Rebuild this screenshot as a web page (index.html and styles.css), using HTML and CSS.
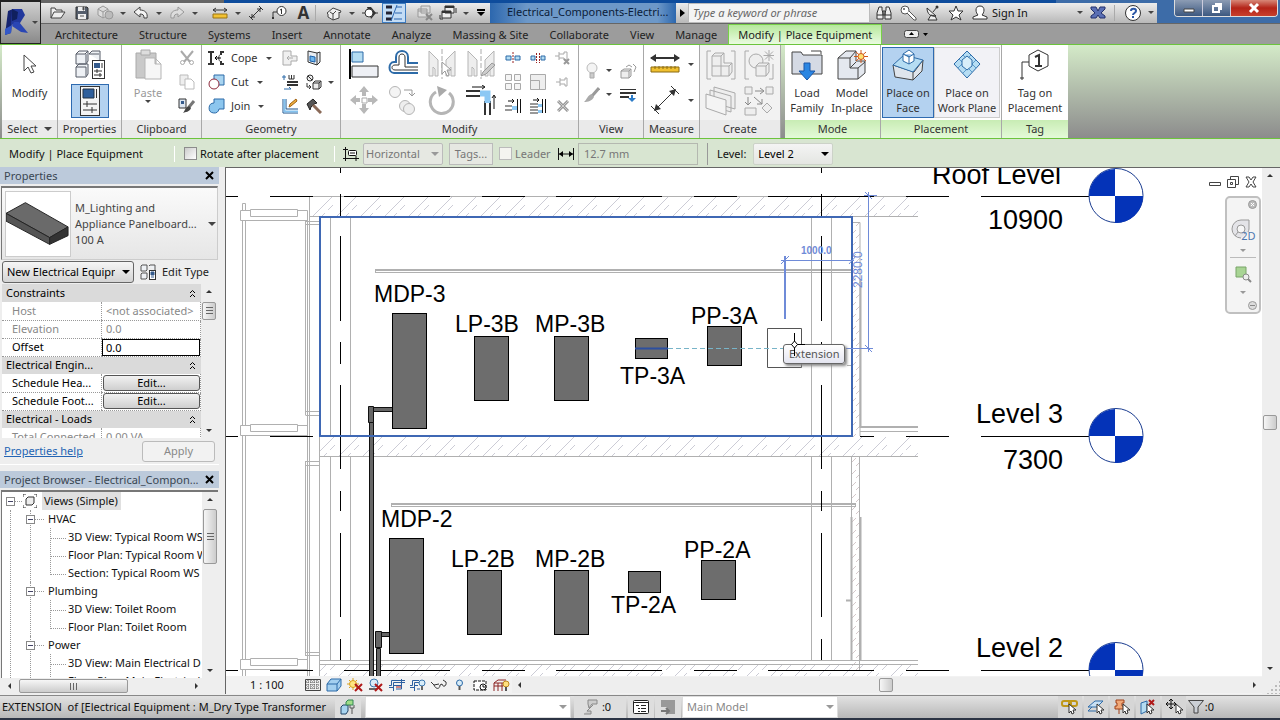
FILE: index.html
```html
<!DOCTYPE html>
<html lang="en">
<head>
    <meta charset="UTF-8">
    <meta name="viewport" content="width=device-width, initial-scale=1.0">
    <title>Electrical_Components-Electrical</title>
    <link rel="stylesheet" href="styles.css">
</head>
<body>
<header class="app-header">
    <button class="app-button" aria-label="Application menu">
        <svg width="26" height="30" viewBox="0 0 26 30"><path d="M4 3L9 1 7 25 1 27z" fill="#16246f"/><path d="M8 1L18 1 21 7 16 15 7 17z" fill="#22389c"/><path d="M8 1L14 4 13 11 8 13z" fill="#10205e"/><path d="M10 14L15 14 24 25 17 24 8 18z" fill="#2a46b4"/><path d="M1 21L8 17 7 25 1 27z" fill="#3458c8"/></svg>
        <i class="caret"></i>
    </button>
    <div class="titlebar">
        <div class="qat">
            <button aria-label="Open"><svg width="16" height="14" viewBox="0 0 16 14"><path d="M1 12V2h4l1 2h6v2M1 12l3-6h11l-4 6z" fill="#eee" stroke="#444"/></svg></button>
            <button aria-label="Save"><svg width="14" height="14" viewBox="0 0 14 14"><path d="M1 1h11l1 1v11H1z" fill="#555e6c" stroke="#333"/><path d="M3 1h7v4H3zM3 8h8v5H3z" fill="#eee"/><path d="M8 1h1v3H8zM5 10h4" fill="#333" stroke="#555"/></svg></button>
            <button aria-label="Synchronize"><svg width="17" height="16" viewBox="0 0 17 16"><path d="M1 4l5-3 5 3v6l-5 3-5-3zM1 4l5 3 5-3M6 7v6" fill="#ddd" stroke="#999"/><circle cx="12" cy="10" r="4" fill="#bbb" stroke="#999"/></svg></button>
            <button class="drop" aria-label="Synchronize options"><i class="caret"></i></button>
            <button aria-label="Undo"><svg width="16" height="14" viewBox="0 0 16 14"><path d="M1 6l6-5v3c5 0 8 3 7 8h-3c0-3-1-4-4-4v3z" fill="#f4f4f4" stroke="#444"/></svg></button>
            <button class="drop" aria-label="Undo list"><i class="caret"></i></button>
            <button aria-label="Redo"><svg width="16" height="14" viewBox="0 0 16 14"><path d="M15 6L9 1v3C4 4 1 7 2 12h3c0-3 1-4 4-4v3z" fill="#ddd" stroke="#999"/></svg></button>
            <button class="drop" aria-label="Redo list"><i class="caret"></i></button>
            <span class="sep"></span>
            <button aria-label="Measure"><svg width="16" height="12" viewBox="0 0 16 12"><path d="M1 3h14M4 1L1 3l3 2M12 1l3 2-3 2" fill="none" stroke="#333"/><path d="M1 7h14v4H1z" fill="#f2c233" stroke="#9a7414"/></svg></button>
            <button class="drop" aria-label="Measure options"><i class="caret"></i></button>
            <button aria-label="Aligned Dimension"><svg width="16" height="16" viewBox="0 0 16 16"><path d="M3 13L13 3M1 11l4 4M11 1l4 4M4 9v3h3M9 4h3v3" fill="none" stroke="#333"/></svg></button>
            <button aria-label="Tag by Category"><svg width="16" height="14" viewBox="0 0 16 14"><circle cx="10.500" cy="5" r="4.500" fill="#fff" stroke="#333"/><path d="M6 6H2v6M10.500 3v5M9 4l2-1" stroke="#333" fill="none"/><path d="M1 11h2v2H1z" fill="#333"/></svg></button>
            <button aria-label="Text" class="text-tool">A</button>
            <span class="sep thin"></span>
            <button aria-label="Default 3D View"><svg width="16" height="15" viewBox="0 0 16 15"><path d="M1 7l6-5 8 3-1 2-1-1v6l-6 2-5-3V8z" fill="#eee" stroke="#444"/><path d="M7 14V8l3-3M7 8L4 6" fill="none" stroke="#444"/></svg></button>
            <button class="drop" aria-label="3D View options"><i class="caret"></i></button>
            <button aria-label="Section"><svg width="16" height="14" viewBox="0 0 16 14"><path d="M5 1h4l5 6-5 6z" fill="#333"/><circle cx="7" cy="7" r="4" fill="#fff" stroke="#333"/><path d="M0 7h3M12 7h4" stroke="#333"/></svg></button>
            <button class="active" aria-label="Thin Lines"><svg width="18" height="16" viewBox="0 0 18 16"><path d="M1 2h6M1 8h6M1 14h6" stroke="#223" stroke-width="3"/><path d="M11 2h6M10 8h7M9 14h8M12 0L6 16" stroke="#2a65b0"/></svg></button>
            <span class="sep"></span>
            <button aria-label="Close Hidden Windows"><svg width="16" height="16" viewBox="0 0 16 16"><path d="M4 1h9v7H4zM1 4h9v8H1zM1 6h9" fill="#ddd" stroke="#999"/><path d="M9 9l6 6M15 9l-6 6" stroke="#888" stroke-width="2"/></svg></button>
            <button aria-label="Switch Windows"><svg width="18" height="16" viewBox="0 0 18 16"><path d="M6 1h9v7H6zM3 6h9v7H3z" fill="#eee" stroke="#333"/><path d="M6 2h9M3 7h9" stroke="#333" stroke-width="2"/><path d="M1 10v4h3M17 3v5" stroke="#333" fill="none"/></svg></button>
            <button class="drop" aria-label="Window list"><i class="caret"></i></button>
            <button class="drop" aria-label="Customize Quick Access Toolbar"><svg width="8" height="8" viewBox="0 0 8 8"><path d="M0 1h8" stroke="#000" stroke-width="2"/><path d="M0 3h8L4 7z"/></svg></button>
        </div>
        <div class="doc-title">Electrical_Components-Electri...</div>
        <div class="infocenter">
            <button class="drop" aria-label="Expand search"><svg width="5" height="8" viewBox="0 0 5 8"><path d="M0 0l5 4-5 4z"/></svg></button>
            <input class="search" type="text" placeholder="Type a keyword or phrase" aria-label="Search">
            <button aria-label="Find"><svg width="16" height="16" viewBox="0 0 16 16"><path d="M3 2h3v3l1 3v6H1V8zM10 2h3l2 6v6H9V8l1-3zM7 6h2v4H7zM1 10h6M9 10h6" fill="#eee" stroke="#333"/></svg></button>
            <button aria-label="Subscription Center"><svg width="17" height="16" viewBox="0 0 17 16"><circle cx="5" cy="5" r="4" fill="#fff" stroke="#555"/><path d="M7 8l7 7h2v-2L9 6" fill="#fff" stroke="#555"/><circle cx="4" cy="4" r="1" fill="#555"/></svg></button>
            <button aria-label="Communication Center"><svg width="15" height="16" viewBox="0 0 15 16"><path d="M2 3c0 6 4 9 9 8zM8 7l4-5M3 15l3-5 4 1 2 4z" fill="#eee" stroke="#333"/><circle cx="12" cy="2" r="1.500" fill="#333"/></svg></button>
            <button aria-label="Favorites"><svg width="16" height="16" viewBox="0 0 16 16"><path d="M8 1l2 5h5l-4 4 2 5-5-3-5 3 2-5-4-4h5z" fill="#fff" stroke="#333"/></svg></button>
            <button class="sign-in"><svg width="16" height="15" viewBox="0 0 16 15"><path d="M8 1c3 0 4 2 4 4s-1 4-2 5l5 2v2H1v-2l5-2C5 9 4 7 4 5s1-4 4-4z" fill="#fff" stroke="#333"/></svg>Sign In</button>
            <button class="drop push" aria-label="Account menu"><i class="caret"></i></button>
            <button aria-label="Exchange Apps"><svg width="16" height="13" viewBox="0 0 16 13"><path d="M1 1h5l2 4 2-4h5v2l-4 4 4 3v2h-5L8 9l-2 3H1v-2l4-3-4-4z" fill="#5a6fb4" stroke="#22306c"/></svg></button>
            <span class="sep thin"></span>
            <button aria-label="Help"><svg width="16" height="16" viewBox="0 0 16 16"><circle cx="8" cy="8" r="7.500" fill="#fff" stroke="#333"/><path d="M6 6c0-3 5-3 5 0 0 2-3 2-3 4M8 11v2" fill="none" stroke="#2c57a5" stroke-width="2"/></svg></button>
            <button class="drop" aria-label="Help menu"><i class="caret"></i></button>
        </div>
        <div class="window-buttons">
            <button aria-label="Minimize"><svg width="12" height="12" viewBox="0 0 12 12"><path d="M1 7h10v3H1z" fill="#fff" stroke="#444"/></svg></button>
            <button aria-label="Restore"><svg width="12" height="12" viewBox="0 0 12 12"><path d="M4 2h6v6M2 4h6v6H2z" fill="none" stroke="#fff" stroke-width="2"/></svg></button>
            <button class="close" aria-label="Close"><svg width="12" height="12" viewBox="0 0 12 12"><path d="M2 2l8 8M10 2l-8 8" stroke="#fff" stroke-width="3"/></svg></button>
        </div>
    </div>
    <nav class="tabs">
        <a href="#">Architecture</a><a href="#">Structure</a><a href="#">Systems</a><a href="#">Insert</a><a href="#">Annotate</a><a href="#">Analyze</a><a href="#">Massing &amp; Site</a><a href="#">Collaborate</a><a href="#">View</a><a href="#">Manage</a><a href="#" class="current">Modify | Place Equipment</a>
        <button class="ribbon-toggle" aria-label="Minimize ribbon"><svg width="24" height="10" viewBox="0 0 24 10"><rect x=".5" y="1.500" width="14" height="7" rx="2" fill="#eee" stroke="#444"/><path d="M5 6h5L7.500 3zM19 4h5l-2.500 3z"/></svg></button>
    </nav>
</header>

<div class="ribbon">
    <section class="panel p-select">
        <div class="body">
            <button class="big"><svg width="32" height="32" viewBox="0 0 32 32"><path d="M11 6v16l4-4 3 6 3-1-3-6h5z" fill="#fff" stroke="#444"/></svg>Modify</button>
        </div>
        <h2>Select <i class="caret"></i></h2>
    </section>
    <section class="panel p-props">
        <div class="body stack">
            <button aria-label="Type Properties"><svg width="32" height="32" viewBox="0 0 32 32"><path d="M2 5l3-3h9v10l-2 3H2zM15 5l3-3h8v10M2 18l3-3h9v10l-2 3H2zM15 5h10M2 5h9l3-3M12 5v9M2 18h10v9" fill="#eef1f5" stroke="#555a66"/><rect x="18.500" y="11.500" width="12" height="18" fill="#fff" stroke="#333"/><path d="M20 14h6v5h-6z" fill="#345a8c"/><path d="M28 14v5M20 22h8M20 26h8M23 20v4M26 24v4" stroke="#333"/></svg></button>
            <button class="active" aria-label="Properties"><svg width="32" height="32" viewBox="0 0 32 32"><rect x="6.500" y="1.500" width="19" height="29" fill="#f4f4f4" stroke="#333"/><path d="M9 4h11v9H9z" fill="#2f5f9c" stroke="#234"/><path d="M22.500 4v9M9 19h14M9 25h14M13 16v6M18 22v6" stroke="#333"/></svg></button>
        </div>
        <h2>Properties</h2>
    </section>
    <section class="panel p-clip">
        <div class="body clip">
            <button class="big off"><svg width="32" height="32" viewBox="0 0 32 32"><path d="M4 4h20v25H4z" fill="#c9c9c9" stroke="#aaa"/><path d="M9 1h9v5H9z" fill="#ddd" stroke="#aaa"/><path d="M13 9h10l6 6v15H13zM23 9v6h6" fill="#f6f6f6" stroke="#b5b5b5"/></svg>Paste<i class="caret"></i></button>
            <div class="small-col">
                <button aria-label="Cut"><svg width="16" height="16" viewBox="0 0 16 16"><path d="M2 1l9 11M14 1L5 12" stroke="#aaa" stroke-width="2"/><circle cx="3.500" cy="12.500" r="2" fill="none" stroke="#aaa"/><circle cx="12.500" cy="12.500" r="2" fill="none" stroke="#aaa"/></svg></button>
                <button aria-label="Copy"><svg width="16" height="16" viewBox="0 0 16 16"><path d="M1 1h8v10H1z" fill="#eee" stroke="#bbb"/><path d="M6 5h6l3 3v7H6z" fill="#fff" stroke="#bbb"/></svg></button>
                <button aria-label="Match Type"><svg width="18" height="16" viewBox="0 0 18 16"><path d="M1 1h7v9H1z" fill="#dde6f2" stroke="#333"/><path d="M3 3h3v3H3z" fill="#345a8c"/><path d="M16 3l-5 6" stroke="#777" stroke-width="3"/><path d="M11 8l2 2c-1 4-6 4-8 5 2-2 2-6 6-7z" fill="#444"/></svg></button>
            </div>
        </div>
        <h2>Clipboard</h2>
    </section>
    <section class="panel p-geom">
        <div class="body geom">
            <button class="row"><svg width="17" height="16" viewBox="0 0 17 16"><path d="M0 2h6M0 14h6M3 2v12M16 2h-3v3M13 11v3h3" fill="none" stroke="#333" stroke-width="2"/><path d="M13 4c-3 1-3 7 0 8" fill="none" stroke="#333"/><path d="M7 8h6M9 6L7 8l2 2" stroke="#000" fill="none"/></svg>Cope<i class="caret"></i></button>
            <button aria-label="Join End"><svg width="16" height="16" viewBox="0 0 16 16"><path d="M1 1h8v5h6v5H9v4H1zM5 8h6M7 6L5 8l2 2" fill="#f0f0f0" stroke="#aaa"/></svg></button>
            <button aria-label="Wall Opening"><svg width="16" height="16" viewBox="0 0 16 16"><path d="M2 1l9 2 3-1v10l-3 3-9-3z" fill="#e8edf3" stroke="#333"/><path d="M4 6l5 1v5l-5-1z" fill="#6db6ee" stroke="#1b5fa8"/><path d="M11 3v12" stroke="#333"/></svg></button>
            <button class="row"><svg width="17" height="16" viewBox="0 0 17 16"><path d="M6 1h10v10H6z" fill="#a8d4f0" stroke="#2d6ba8"/><circle cx="6" cy="10" r="5" fill="#fff" stroke="#8e2a3c"/></svg>Cut<i class="caret"></i></button>
            <button aria-label="Beam Joins"><svg width="16" height="16" viewBox="0 0 16 16"><path d="M5 8h11M5 11h11" stroke="#333" stroke-width="2"/><path d="M7 1v4h5V1M9.500 1v4" stroke="#333" fill="none"/><path d="M2 1v5M0 3h4M2 15h7M7 13l2 2" stroke="#2d6ba8" fill="none"/></svg></button>
            <button class="wide" aria-label="Split Face"><svg width="16" height="16" viewBox="0 0 16 16"><circle cx="4" cy="4" r="3" fill="#eee" stroke="#333"/><path d="M2 2l4 4M1 9v4h3M3 11l2 2-2 2" stroke="#333" fill="none"/><path d="M7 9l2-2h6v6l-2 2H7zM7 9h6v6M13 9l2-2" fill="#eee" stroke="#333"/></svg><i class="caret"></i></button>
            <button class="row"><svg width="17" height="16" viewBox="0 0 17 16"><path d="M6 1h10v10h-5a5 5 0 1 1-5-6z" fill="#8cc6ee" stroke="#2d6ba8"/></svg>Join<i class="caret"></i></button>
            <button aria-label="Wall Joins"><svg width="16" height="16" viewBox="0 0 16 16"><path d="M1 1v14h15M4 1v10h12" fill="none" stroke="#1b4f86"/><path d="M2.500 1v12.500H16" fill="none" stroke="#85c2ee" stroke-width="2"/><path d="M7 9l1-3 6-5 1 2-6 5z" fill="#f0b040" stroke="#a06010"/></svg></button>
            <button aria-label="Demolish"><svg width="16" height="16" viewBox="0 0 16 16"><path d="M1 6l6-5 4 4-3 1-3 3-1 3z" fill="#555" stroke="#222"/><path d="M7 7l8 8" stroke="#8a6a58" stroke-width="3"/></svg></button>
        </div>
        <h2>Geometry</h2>
    </section>
    <section class="panel p-modify">
        <div class="body modify">
            <div class="big-grid">
                <button aria-label="Align"><svg width="30" height="30" viewBox="0 0 30 30"><path d="M1 0v30" stroke="#000" stroke-width="2"/><path d="M3 3h11v10H3z" fill="#b4dcf2" stroke="#2d6ba8"/><path d="M3 17h26v11H3z" fill="#eef0f5" stroke="#333"/></svg></button>
                <button aria-label="Offset"><svg width="30" height="30" viewBox="0 0 30 30"><path d="M30 14H20V8c0-8-12-8-12 0v5H6c-6 0-6 11 0 11h24" fill="none" stroke="#2d6ba8" stroke-width="2"/><path d="M30 18H17V8c0-4-6-4-6 0v8H7c-4 0-4 5 0 5h23" fill="none" stroke="#333"/></svg></button>
                <button aria-label="Mirror - Pick Axis"><svg width="30" height="30" viewBox="0 0 30 30"><path d="M2 2l9 9v16H8v-7l-2-2v9H2zM28 2l-9 9v16h3v-7l2-2v9h4z" fill="#eee" stroke="#b5b5b5"/><path d="M15 0v30" stroke="#aaa" stroke-dasharray="5 2"/><path d="M15 13v12l3-3 2 5 2-1-2-5h4z" fill="#fff" stroke="#999"/></svg></button>
                <button aria-label="Mirror - Draw Axis"><svg width="30" height="30" viewBox="0 0 30 30"><path d="M2 2l9 9v16H8v-7l-2-2v9H2zM28 2l-9 9v16h3v-7l2-2v9h4z" fill="#eee" stroke="#b5b5b5"/><path d="M15 0v30" stroke="#aaa" stroke-dasharray="5 2"/><path d="M15 27l2-4 9-9 3 2-9 9z" fill="#ccc" stroke="#999"/></svg></button>
                <button aria-label="Move"><svg width="30" height="30" viewBox="0 0 30 30"><path d="M15 1l5 6h-3v4h-4V7h-3zM15 29l5-6h-3v-4h-4v4h-3zM1 15l6-5v3h4v4H7v3zM29 15l-6-5v3h-4v4h4v3z" fill="#b8b8b8"/><path d="M13 13h5v5h-5z" fill="#fff" stroke="#aaa"/></svg></button>
                <button aria-label="Copy element"><svg width="30" height="30" viewBox="0 0 30 30"><circle cx="7" cy="7" r="5.500" fill="#f4f4f4" stroke="#b5b5b5"/><circle cx="17" cy="21" r="5.500" fill="#eee" stroke="#b5b5b5"/><circle cx="21" cy="24" r="5.500" fill="#eee" stroke="#b5b5b5"/><path d="M16 5h8v6M21 8l3 3 3-3" fill="none" stroke="#999"/></svg></button>
                <button aria-label="Rotate"><svg width="30" height="30" viewBox="0 0 30 30"><path d="M9 7a11.500 11.500 0 1 0 13 1" fill="none" stroke="#b5b5b5" stroke-width="3"/><path d="M10 1l10 4-8 7z" fill="#aaa"/></svg></button>
                <button aria-label="Trim/Extend to Corner"><svg width="30" height="30" viewBox="0 0 30 30"><path d="M0 6h14M0 11h14M19 16v14M24 16v14" stroke="#333" stroke-width="2"/><path d="M14 8.500h7.500V18" fill="none" stroke="#8cc8f4" stroke-width="6"/><path d="M6 2h12M16 0l3 2-3 2M28 24V11M26 13l2-3 2 3" fill="none" stroke="#111"/></svg></button>
            </div>
            <div class="small-grid">
                <button aria-label="Split Element"><svg width="16" height="12" viewBox="0 0 16 12"><path d="M1 4h5v4H1zM10 4h5v4h-5z" fill="#b4dcf2" stroke="#2d6ba8"/><path d="M8 0v12" stroke="#922" stroke-dasharray="2 1"/></svg></button>
                <button aria-label="Split with Gap"><svg width="16" height="12" viewBox="0 0 16 12"><path d="M1 4h4v4H1zM11 4h4v4h-4z" fill="#b4dcf2" stroke="#2d6ba8"/><path d="M6.500 1v10M9.500 1v10" stroke="#922" stroke-dasharray="2 1"/></svg></button>
                <button aria-label="Unpin"><svg width="16" height="16" viewBox="0 0 16 16"><path d="M0 6h4M4 2v8M4 4h5V2h3v8H9V8H4" fill="none" stroke="#aaa"/><path d="M9 9l5 5M14 9l-5 5" stroke="#999" stroke-width="2"/></svg></button>
                <button aria-label="Array"><svg width="16" height="16" viewBox="0 0 16 16"><path d="M.500.500h6v6h-6zM9.500.500h6v6h-6zM.500 9.500h6v6h-6zM9.500 9.500h6v6h-6z" fill="#f4f4f4" stroke="#aaa"/></svg></button>
                <button aria-label="Scale"><svg width="16" height="16" viewBox="0 0 16 16"><path d="M.500.500h15v15H.500z" fill="#eee" stroke="#aaa"/><path d="M1 6.500h8.500V15" fill="none" stroke="#aaa"/></svg></button>
                <button aria-label="Pin"><svg width="16" height="16" viewBox="0 0 16 16"><path d="M1 8h4M5 4v8M5 6h5V4h2v8h-2v-2H5" fill="none" stroke="#aaa"/></svg></button>
                <button aria-label="Trim/Extend Single"><svg width="16" height="16" viewBox="0 0 16 16"><path d="M0 8h7M0 12h7" stroke="#333"/><path d="M7 10h5" stroke="#8cc8f4" stroke-width="4"/><path d="M12.500 1v14M15.500 1v14" stroke="#111"/><path d="M3 3h6M7 1l2 2-2 2" stroke="#111" fill="none"/></svg></button>
                <button aria-label="Trim/Extend Multiple"><svg width="16" height="16" viewBox="0 0 16 16"><path d="M0 6h8M0 9h8M0 12h8M0 15h8" stroke="#333"/><path d="M8 7.500h4M8 13.500h4" stroke="#8cc8f4" stroke-width="3"/><path d="M12.500 1v14M15.500 1v14" stroke="#111"/><path d="M3 2h6M7 0l2 2-2 2" stroke="#111" fill="none"/></svg></button>
                <button aria-label="Delete"><svg width="12" height="12" viewBox="0 0 12 12"><path d="M1 1l10 10M11 1L1 11" stroke="#999" stroke-width="3"/><path d="M1 1l10 10M11 1L1 11" stroke="#ccc"/></svg></button>
            </div>
        </div>
        <h2>Modify</h2>
    </section>
    <section class="panel p-view">
        <div class="body pair">
            <button class="wide" aria-label="Hide in View"><svg width="16" height="18" viewBox="0 0 16 18"><circle cx="8" cy="6" r="5" fill="#f4f4f4" stroke="#bbb"/><path d="M6 11h4v5H6z" fill="#ccc" stroke="#aaa"/></svg><i class="caret"></i></button>
            <button aria-label="Displace"><svg width="18" height="16" viewBox="0 0 18 16"><path d="M2 8l3-2h7v7l-2 2H2zM2 8h8v7M10 8l2-2" fill="#eee" stroke="#999"/><path d="M7 4l3-2 3 2M14 1l3 3-2 5" fill="none" stroke="#999"/></svg></button>
            <button class="wide" aria-label="Override Graphics"><svg width="16" height="16" viewBox="0 0 16 16"><path d="M15 1L8 9" stroke="#999" stroke-width="3"/><path d="M8 7l2 3c-2 4-6 5-10 5 3-2 3-7 8-8z" fill="#aaa"/></svg><i class="caret"></i></button>
            <button aria-label="Linework"><svg width="16" height="16" viewBox="0 0 16 16"><path d="M0 2.500h16" stroke="#333"/><path d="M0 6h16" stroke="#333" stroke-width="2"/><path d="M0 10h9" stroke="#333" stroke-width="2"/><path d="M11 8v3H8l4 4 4-4h-3V8z" fill="#2d7cc8"/></svg></button>
        </div>
        <h2>View</h2>
    </section>
    <section class="panel p-measure">
        <div class="body measure">
            <button class="wide" aria-label="Measure Between"><svg width="30" height="30" viewBox="0 0 30 30"><path d="M1 9h28" stroke="#333" stroke-width="2"/><path d="M6 5L0 9l6 4zM24 5l6 4-6 4z" fill="#333"/><path d="M1 18h28v5H1z" fill="#f0c030" stroke="#8a6a10"/><path d="M5 17v3M9 17v3M13 17v3M17 17v3M21 17v3M25 17v3" stroke="#8a6a10"/></svg><i class="caret"></i></button>
            <button class="wide" aria-label="Aligned"><svg width="30" height="30" viewBox="0 0 30 30"><path d="M5 25L25 5M1 21l8 8M21 1l8 8" stroke="#333"/><path d="M4 26l2-7 5 5zM26 4l-7 2 5 5z" fill="#333"/></svg><i class="caret"></i></button>
        </div>
        <h2>Measure</h2>
    </section>
    <section class="panel p-create">
        <div class="body pair create">
            <button aria-label="Create Assembly"><svg width="30" height="30" viewBox="0 0 30 30"><path d="M5 1H1v28h4M25 1h4v28h-4" fill="none" stroke="#aaa"/><path d="M6 6l3-3h9v10h8v9l-3 4H6zM6 16h17l3-3M6 6h9v10M15 6l3-3M15 16v10M23 16v10" fill="#eee" stroke="#aaa"/></svg></button>
            <button aria-label="Create Similar"><svg width="30" height="30" viewBox="0 0 30 30"><path d="M5 1H1v28h4M29 14v15h-4" fill="none" stroke="#aaa"/><circle cx="12" cy="11" r="7" fill="#eee" stroke="#aaa"/><path d="M12 16l3-3h10v9l-3 4H12zM12 16h10v10M22 16l3-3" fill="#eee" stroke="#aaa"/><path d="M25 0v11M19.500 5.500h11M21 1.500l8 8M29 1.500l-8 8" stroke="#aaa"/></svg></button>
            <button aria-label="Create Parts"><svg width="32" height="30" viewBox="0 0 32 30"><path d="M9 1l21 6v16l-21-6zM5 4l21 6v16l-21-6z" fill="#eee" stroke="#aaa"/><path d="M1 8l20 6v15L1 22z" fill="#f4f4f4" stroke="#aaa"/></svg></button>
            <button aria-label="Create Group"><svg width="30" height="30" viewBox="0 0 30 30"><path d="M1 1h7v7H1zM22 1h7v7h-7zM1 22h11v7H1zM23 17l5 5-5 5-5-5z" fill="#eee" stroke="#aaa"/><path d="M11 5h8M16 2l4 3-4 3M4 11v7M1 16l3 3 3-3M10 11l8 7M18 13v5h-5" fill="none" stroke="#888"/></svg></button>
        </div>
        <h2>Create</h2>
    </section>
    <section class="panel green p-mode">
        <div class="body">
            <button class="big"><svg width="32" height="32" viewBox="0 0 32 32"><path d="M1 3h9l2 3h19v19H1z" fill="#d5dae4" stroke="#444"/><path d="M20 2h10v3" fill="none" stroke="#444"/><path d="M13 14h6v8h5l-8 9-8-9h5z" fill="#2b86e2" stroke="#1a56a8"/></svg>Load<br>Family</button>
            <button class="big"><svg width="32" height="32" viewBox="0 0 32 32"><path d="M2 9l8-7h10v10h9v12l-7 6H2z" fill="#e4e8ef" stroke="#444"/><path d="M2 9h12l6-7M14 9v10h8v11M14 19l6-6M22 19l7-6" fill="none" stroke="#444"/><path d="M25 1v13M18 7.500h14M20 3l10 9M30 3l-10 9" stroke="#d0581c"/><circle cx="25" cy="7.500" r="3" fill="#ffe070" stroke="#d0581c"/></svg>Model<br>In-place</button>
        </div>
        <h2>Mode</h2>
    </section>
    <section class="panel green p-place">
        <div class="body">
            <button class="big active"><svg width="32" height="32" viewBox="0 0 32 32"><path d="M1 16l2 12 18 3 9-9 1-11-9 12z" fill="#dfe5ec" stroke="#444"/><path d="M21 23v8" stroke="#444"/><path d="M1 16L12 6l19 5-10 12z" fill="#b6ddf3" stroke="#2d6ba8"/><path d="M11 5l6-4 5 4v7l-5 3-6-3zM11 5l6 3 5-3M17 8v7" fill="#fff" stroke="#2d6ba8"/></svg>Place on<br>Face</button>
            <button class="big framed"><svg width="32" height="32" viewBox="0 0 32 32"><path d="M16 2l13 13-13 14L3 15z" fill="#b6ddf3" stroke="#2d6ba8"/><path d="M12 6l13 13M8 10l13 13M20 6L7 19M25 11L12 24" stroke="#5b9ccc"/><path d="M11 11l5-4 5 4v6l-5 4-5-4z" fill="#d8eef9" stroke="#2d6ba8"/></svg>Place on<br>Work Plane</button>
        </div>
        <h2>Placement</h2>
    </section>
    <section class="panel green p-tag">
        <div class="body">
            <button class="big"><svg width="32" height="32" viewBox="0 0 32 32"><path d="M19 1l10 5v11l-10 5-9-5V6z" fill="#fff" stroke="#333"/><path d="M10 13H3v14" fill="none" stroke="#333"/><path d="M2 28h2v2H2z" fill="#fff" stroke="#333"/><path d="M16 8l4-2v11M16 17h7" fill="none" stroke="#333" stroke-width="2"/></svg>Tag on<br>Placement</button>
        </div>
        <h2>Tag</h2>
    </section>
</div>

<form class="options-bar">
    <strong class="mode-name">Modify | Place Equipment</strong>
    <label class="check"><input type="checkbox">Rotate after placement</label>
    <div class="tag-options">
        <svg width="16" height="14" viewBox="0 0 16 14"><path d="M2.500 0v14M0 2.500h5M0 11.500h16M13 9v5" stroke="#111"/><rect x="5.500" y="3.500" width="8" height="5" rx="1" fill="#fff" stroke="#111"/><path d="M7 6h5" stroke="#111"/></svg>
        <span class="combo off"><select aria-label="Tag orientation" disabled><option>Horizontal</option></select></span>
        <button type="button" class="tags" disabled>Tags...</button>
        <label class="check"><input type="checkbox" disabled>Leader</label>
        <svg width="16" height="12" viewBox="0 0 16 12"><path d="M.500 0v12M15.500 0v12M1 6h14" stroke="#111"/><path d="M5 3L1 6l4 3zM11 3l4 3-4 3z"/></svg>
        <input class="length" type="text" value="12.7 mm" aria-label="Leader length" disabled>
    </div>
    <label class="level">Level: <span class="combo white"><select><option>Level 2</option></select></span></label>
</form>

<main class="workspace">
    <aside class="palettes">
        <section class="palette">
            <header><h3>Properties</h3><button aria-label="Close Properties"><svg width="9" height="9" viewBox="0 0 9 9"><path d="M1 1l7 7M8 1L1 8" stroke="#000" stroke-width="2"/></svg></button></header>
            <div class="type-selector">
                <svg width="66" height="66" viewBox="0 0 66 66"><path d="M0 22L20 11 64 36 45 47z" fill="#6a6a6a" stroke="#222"/><path d="M0 22v8l45 24v-7z" fill="#555" stroke="#222"/><path d="M45 47l19-11v9L45 54z" fill="#333" stroke="#222"/></svg>
                <p>M_Lighting and<br>Appliance Panelboard...<br>100 A</p>
                <i class="caret"></i>
            </div>
            <div class="instance">
                <span class="combo"><select aria-label="Instance filter"><option>New Electrical Equipment</option></select></span>
                <button class="edit-type"><svg width="17" height="16" viewBox="0 0 17 16"><path d="M1 2l1-1h5v5l-1 1H1zM9 2l1-1h5v5M1 10l1-1h5v5l-1 1H1z" fill="#eef1f5" stroke="#555"/><rect x="9.500" y="6.500" width="6" height="9" fill="#fff" stroke="#333"/><path d="M11 8h3v3h-3zM11 13h3" fill="#345a8c" stroke="#345a8c"/></svg>Edit Type</button>
            </div>
            <div class="grid-view">
                <table>
                    <colgroup><col class="name-col"><col></colgroup>
                    <tr><th colspan="2"><span>Constraints<svg width="9" height="9" viewBox="0 0 9 9"><path d="M2 4l2.500-2.500L7 4M2 8l2.500-2.500L7 8" fill="none" stroke="#000"/></svg></span></th></tr>
                    <tr class="ro"><td>Host</td><td>&lt;not associated&gt;</td></tr>
                    <tr class="ro"><td>Elevation</td><td>0.0</td></tr>
                    <tr><td><label for="offset">Offset</label></td><td class="field"><input id="offset" type="text" value="0.0"></td></tr>
                    <tr><th colspan="2"><span>Electrical Engin...<svg width="9" height="9" viewBox="0 0 9 9"><path d="M2 4l2.500-2.500L7 4M2 8l2.500-2.500L7 8" fill="none" stroke="#000"/></svg></span></th></tr>
                    <tr><td>Schedule Hea...</td><td class="field"><button>Edit...</button></td></tr>
                    <tr><td>Schedule Foot...</td><td class="field"><button>Edit...</button></td></tr>
                    <tr><th colspan="2"><span>Electrical - Loads<svg width="9" height="9" viewBox="0 0 9 9"><path d="M2 4l2.500-2.500L7 4M2 8l2.500-2.500L7 8" fill="none" stroke="#000"/></svg></span></th></tr>
                    <tr class="ro"><td>Total Connected</td><td>0.00 VA</td></tr>
                </table>
                <div class="vscroll"><i class="up"></i><b class="thumb grip short"></b><i class="down"></i></div>
            </div>
            <footer><a href="#">Properties help</a><button disabled>Apply</button></footer>
        </section>

        <section class="palette browser">
            <header><h3>Project Browser - Electrical_Compon...</h3><button aria-label="Close Project Browser"><svg width="9" height="9" viewBox="0 0 9 9"><path d="M1 1l7 7M8 1L1 8" stroke="#000" stroke-width="2"/></svg></button></header>
            <div class="tree-view">
                <div class="tree">
                    <div class="node root"><i class="box"></i><i class="twig"></i><svg width="14" height="14" viewBox="0 0 14 14"><path d="M0 3V0h3M11 0h3v3M14 11v3h-3M3 14H0v-3" fill="none" stroke="#333"/><path d="M3 5l2-2h6v6l-2 2H3z" fill="#eee" stroke="#333"/></svg><span class="picked">Views (Simple)</span></div>
                    <ul class="disciplines">
                        <li><div class="node"><i class="box"></i><i class="twig"></i>HVAC</div>
                            <ul><li>3D View: Typical Room WS</li><li>Floor Plan: Typical Room W</li><li>Section: Typical Room WS</li></ul></li>
                        <li><div class="node"><i class="box"></i><i class="twig"></i>Plumbing</div>
                            <ul><li>3D View: Toilet Room</li><li>Floor Plan: Toilet Room</li></ul></li>
                        <li><div class="node"><i class="box"></i><i class="twig"></i>Power</div>
                            <ul><li>3D View: Main Electrical D</li><li>Floor Plan: Main Electrical</li></ul></li>
                    </ul>
                </div>
                <div class="vscroll"><i class="up"></i><b class="thumb grip tall"></b><i class="down"></i></div>
            </div>
            <div class="hscroll"><i class="left"></i><b class="thumb"></b><i class="right"></i></div>
        </section>
    </aside>

    <section class="view">
        <div class="canvas">
            <svg class="drawing" role="img" aria-label="Electrical elevation">
                <defs>
                    <pattern id="slab" width="24" height="20" patternUnits="userSpaceOnUse" patternTransform="translate(0 197)"><path d="M0 20L20 0M9 20l4-4M16 13l5-5" stroke="#ccccd6" fill="none"/></pattern>
                    <pattern id="slab2" width="24" height="20" patternUnits="userSpaceOnUse" patternTransform="translate(2 437)"><path d="M0 20L20 0M9 20l4-4M16 13l5-5" stroke="#ccccd6" fill="none"/></pattern>
                    <pattern id="wall" width="8" height="12" patternUnits="userSpaceOnUse"><path d="M0 10L8 2" stroke="#d4c8ca" fill="none"/></pattern>
                </defs>
                <!-- model coordinates start at the window corner -->
                <g transform="translate(-226 -168)">
                    <g stroke="none">
                        <path d="M309 197H918V216H309z" fill="url(#slab)"/>
                        <path d="M320 437H918V456H320z" fill="url(#slab2)"/>
                        <path d="M320 665H918V684H320z" fill="url(#slab2)"/>
                        <path d="M852 217h8v220h-8zM852 456h8v214h-8z" fill="#fff"/>
                        <path d="M852 222h8v215h-8zM852 456h8v214h-8z" fill="url(#wall)"/>
                    </g>
                    <g class="thin">
                        <path d="M309.500 196.500H918M309.500 196.500V676M307.500 213V676M309 216.500H320M852 216.500H918M320 456.500H918M320 660.500H918M320 664.500H918M319.500 436V676"/>
                        <path d="M330.500 217V436M350.500 217V436M811.500 217V436M831.500 217V436M330.500 457V660M350.500 457V660M811.500 457V660M831.500 457V660"/>
                        <path d="M242.500 203.500h3v7h-3zM242.500 220V425M245.500 220V425M242.500 435V659M245.500 435V659M242.500 669V676M245.500 669V676"/>
                        <path d="M250.500 210.500h-10v10h67v-10h-10M250.500 209.500h47v7h-47zM250.500 425.500h-10v10h67v-10h-10M250.500 424.500h47v7h-47zM250.500 659.500h-10v10h67v-10h-10M250.500 658.500h47v7h-47z"/>
                        <path d="M305.500 221.500h14M305.500 224.500h14M305.500 221V415M305.500 411.500h14M305.500 415.500h14M305.500 461.500h14M305.500 465.500h14M305.500 461V656M305.500 652.500h14M305.500 655.500h14"/>
                        <path d="M852 222.500h8V436M860 431.500h58M851.500 457V660M859.500 457V670M847 365.500h5"/>
                        <path d="M375 272.500H852M391 506.500H856M375.500 270v3M391.500 503v4M855.500 503v4"/>
                        <path d="M375 270H852M391 504H856M860 427H918M860.500 280V428M860.500 517V660M851.500 517V660M846 600.500h5" stroke-width="2"/>
                    </g>
                    <path class="ink" d="M226 196.500H238M270 196.500H313M344 196.500H450M482 196.500H525M556 196.500H662M694 196.500H737M768 196.500H874M906 196.500H949M981 196.500H1089M226 436.500H238M270 436.500H313M860 436.500H874M906 436.500H949M981 436.500H1089M226 670.500H238M270 670.500H313M344 670.500H450M482 670.500H525M556 670.500H662M694 670.500H737M768 670.500H874M906 670.500H949M981 670.500H1089"/>
                    <path class="ink" d="M340.500 168v5M340.500 194v22M340.500 236v85M340.500 342v22M340.500 385v84M340.500 491v20M340.500 533v84M340.500 639v21M821.500 168v5M821.500 194v22M821.500 236v85M821.500 342v22M821.500 385v84M821.500 491v20M821.500 533v84M821.500 639v21"/>
                    <g class="conduit">
                        <path d="M369.500 422.500h4V680h-4zM368.500 406.500h5v16h-5zM373.500 407.500h19v4h-19zM376.500 648.500h4V680h-4zM375.500 631.500h6v16h-6zM381.500 632.500h8v4h-8z"/>
                    </g>
                    <rect class="face" x="320" y="217" width="532" height="219"/>
                    <g class="gear">
                        <rect x="392.500" y="313.500" width="34" height="115"/>
                        <rect x="474.500" y="336.500" width="34" height="64"/>
                        <rect x="554.500" y="336.500" width="34" height="64"/>
                        <rect x="635.500" y="338.500" width="32" height="20"/>
                        <rect x="707.500" y="326.500" width="34" height="39"/>
                        <rect x="389.500" y="538.500" width="34" height="115"/>
                        <rect x="467.500" y="570.500" width="34" height="64"/>
                        <rect x="554.500" y="570.500" width="34" height="64"/>
                        <rect x="628.500" y="571.500" width="32" height="21"/>
                        <rect x="701.500" y="560.500" width="34" height="39"/>
                    </g>
                    <path d="M767.500 328.500h34v39h-34z" fill="none" stroke="#555"/>
                    <g class="marks">
                        <text x="374" y="302">MDP-3</text><text x="455" y="332">LP-3B</text><text x="535" y="332">MP-3B</text><text x="620" y="384">TP-3A</text><text x="691" y="324">PP-3A</text>
                        <text x="381" y="527">MDP-2</text><text x="451" y="567">LP-2B</text><text x="535" y="567">MP-2B</text><text x="611" y="613">TP-2A</text><text x="684" y="558">PP-2A</text>
                    </g>
                    <g class="levels">
                        <text x="1061" y="184">Roof Level</text><text x="1063" y="229">10900</text>
                        <text x="1063" y="423">Level 3</text><text x="1063" y="469">7300</text>
                        <text x="1063" y="657">Level 2</text>
                    </g>
                    <g class="heads">
                        <circle cx="1116" cy="195.500" r="27"/><path d="M1115 196H1089a27 27 0 0 1 26-27zM1115 196h28a27 27 0 0 1-28 27z"/>
                        <circle cx="1116" cy="435.500" r="27"/><path d="M1115 436H1089a27 27 0 0 1 26-27zM1115 436h28a27 27 0 0 1-28 27z"/>
                        <circle cx="1116" cy="669.500" r="27"/><path d="M1115 670H1089a27 27 0 0 1 26-27zM1115 670h28a27 27 0 0 1-28 27z"/>
                    </g>
                    <g class="dims">
                        <path d="M864 195.500h13M868.500 192V352M846 348.500h27M781 260.500h73M865 192l7 7M865 345l7 7M781 264l8-8M849 264l7-8"/>
                        <path d="M785 256V319" stroke-width="2"/>
                        <text x="801" y="254">1000.0</text>
                        <text class="vertical" transform="translate(862 288) rotate(-90)">2280.0</text>
                    </g>
                    <path d="M668 348.500H785" stroke="#78b4c8" stroke-dasharray="5 3"/>
                    <path d="M635 348.500H668" stroke="#2c4fa0" stroke-width="2"/>
                </g>
            </svg>
            <div class="tooltip" role="tooltip">Extension</div>
            <svg class="snap" width="21" height="23" viewBox="0 0 21 23"><path d="M10.500 0v9M10.500 14v9M13 11.500h8" stroke="#000"/><path d="M10.500 8l3 3.500-3 3.500-3-3.500z" fill="#fff" stroke="#000"/></svg>
            <div class="view-controls">
                <button aria-label="Minimize view"><svg width="12" height="12" viewBox="0 0 12 12"><path d="M.500 6.500h11v3H.500z" fill="#fff" stroke="#444"/></svg></button>
                <button aria-label="Restore view"><svg width="12" height="12" viewBox="0 0 12 12"><path d="M3.500 3V.500h8v8H9M.500 3.500h8v8h-8zM3.500 6.500h2v2h-2z" fill="#fff" stroke="#444"/></svg></button>
                <button aria-label="Close view"><svg width="12" height="12" viewBox="0 0 12 12"><path d="M1 1h3l2 3 2-3h3L8 6l3 5H8L6 8l-2 3H1l3-5z" fill="#fff" stroke="#444"/></svg></button>
            </div>
            <div class="navbar">
                <button class="end" aria-label="Close navigation bar"><svg width="9" height="9" viewBox="0 0 9 9"><circle cx="4.500" cy="4.500" r="4" fill="#bbb" stroke="#999"/><path d="M3 3l3 3M6 3L3 6" stroke="#fff"/></svg></button>
                <button class="wheel" aria-label="Steering wheel 2D"><svg width="22" height="24" viewBox="0 0 22 24"><path d="M11 20a9 9 0 1 1 0-18h8v9a9 9 0 0 1-1 3" fill="#e4e4e8" stroke="#999"/><circle cx="11" cy="11" r="4" fill="#f6f6f6" stroke="#999"/><path d="M8 14l-3 4M14 14l1 2" stroke="#999"/></svg><span>2D</span></button>
                <i class="caret"></i>
                <hr>
                <button aria-label="Zoom"><svg width="17" height="17" viewBox="0 0 17 17"><path d="M1 1h10v10H1z" fill="#a8d494" stroke="#78a468"/><circle cx="11" cy="11" r="3" fill="#eee" stroke="#888"/><path d="M13 13l3 3" stroke="#888" stroke-width="2"/></svg></button>
                <i class="caret"></i>
                <button class="end last" aria-label="Navigation bar options"><svg width="9" height="9" viewBox="0 0 9 9"><circle cx="4.500" cy="4.500" r="4" fill="#ddd" stroke="#999"/><path d="M2 4.500h5" stroke="#888"/></svg></button>
            </div>
        </div>
        <div class="vscroll canvas-scroll"><i class="up"></i><b class="thumb"></b><i class="down"></i></div>
        <div class="view-bar">
            <button class="scale">1 : 100</button>
            <button aria-label="Detail Level"><svg width="16" height="12" viewBox="0 0 16 12"><path d="M.500.500h15v11H.500z" fill="#eee" stroke="#444"/><path d="M1 3h14M1 6h14M1 9h14M3 1v10M6 1v10M9 1v10M12 1v10" stroke="#555" stroke-dasharray="1 1"/></svg></button>
            <button aria-label="Visual Style"><svg width="16" height="14" viewBox="0 0 16 14"><path d="M1 6l4-5h10v7l-4 5H1z" fill="#a4d0f0" stroke="#2d6ba8"/><path d="M1 6h10v7M11 6l4-5" fill="none" stroke="#2d6ba8"/></svg></button>
            <button aria-label="Sun Path Off"><svg width="16" height="14" viewBox="0 0 16 14"><path d="M6 0v12M0 6h12M2 2l8 8M10 2l-8 8" stroke="#d8a020"/><circle cx="6" cy="6" r="3.500" fill="#ffe680" stroke="#d8a020"/><path d="M8 6l7 7M15 6l-7 7" stroke="#b01818" stroke-width="2"/></svg></button>
            <button aria-label="Shadows Off"><svg width="16" height="14" viewBox="0 0 16 14"><circle cx="6" cy="5" r="4" fill="#d8ecf8" stroke="#3c78b0"/><path d="M1 11h8" stroke="#666" stroke-width="2"/><path d="M7 6l7 7M14 6l-7 7" stroke="#b01818" stroke-width="2"/></svg></button>
            <button aria-label="Crop View"><svg width="16" height="14" viewBox="0 0 16 14"><path d="M0 9.500h4.500V4.500H16M4.500 13V7.500h8M12.500 1v10H7" fill="none" stroke="#2d5fa0"/><path d="M0 7.500h2.500v-5H16" fill="none" stroke="#2d5fa0"/><path d="M7 9h5" stroke="#b01818"/></svg></button>
            <button aria-label="Crop Region"><svg width="16" height="14" viewBox="0 0 16 14"><path d="M0 9.500h4.500V4.500H9M4.500 13V7.500H8M0 7.500h2.500v-5H9M7 11h3" fill="none" stroke="#2d5fa0"/><circle cx="12" cy="5" r="3" fill="#d8ecf8" stroke="#3c78b0"/><path d="M12 8v4" stroke="#666" stroke-width="2"/></svg></button>
            <button aria-label="Temporary Hide/Isolate"><svg width="17" height="12" viewBox="0 0 17 12"><path d="M1 3l3 3c2 5 6 4 6 0l2-1c1 4 5 2 4-2l-3-2M4 6l5-1" fill="none" stroke="#333"/></svg></button>
            <button aria-label="Reveal Hidden Elements"><svg width="9" height="12" viewBox="0 0 9 12"><circle cx="4.500" cy="4" r="3" fill="#d8ecf8" stroke="#2d6ba8"/><path d="M4.500 7v4" stroke="#555" stroke-width="2"/></svg></button>
            <button aria-label="Temporary View Properties"><svg width="15" height="13" viewBox="0 0 15 13"><path d="M1 2h12v9H1z" fill="#fff" stroke="#111" stroke-dasharray="3 1"/><circle cx="10" cy="8" r="3" fill="#fff" stroke="#111"/><path d="M10 6v2h2" stroke="#111" fill="none"/></svg></button>
            <button aria-label="Analytical Model"><svg width="17" height="13" viewBox="0 0 17 13"><path d="M1 12V4l4-3h8M1 7h9M5 12V4M9 12V4M1 4h10" fill="none" stroke="#8c2424"/><circle cx="13" cy="5" r="3" fill="#ffe080" stroke="#c08820"/><path d="M13 8v4" stroke="#555" stroke-width="2"/></svg></button>
            <div class="hscroll"><i class="left"></i><b class="thumb"></b><i class="right"></i></div>
        </div>
        <div class="sizer"></div>
    </section>
</main>

<footer class="status">
    <output>EXTENSION&nbsp; of [Electrical Equipment : M_Dry Type Transformer</output>
    <button aria-label="Worksets"><svg width="16" height="16" viewBox="0 0 16 16"><path d="M1 8l2-2h5v6l-2 3H1z" fill="#a8d4f0" stroke="#246"/><path d="M6 3l2-2h5v5H6z" fill="#a0dc88" stroke="#385"/><path d="M12 9v6M10 6v3h4V6" stroke="#555" fill="none"/></svg></button>
    <span class="combo white off workset"><select aria-label="Active workset" disabled><option></option></select></span>
    <button class="count"><svg width="16" height="16" viewBox="0 0 16 16"><path d="M5 1h9v4H9l-3 4-1-4zM1 15h7v-3H4l6-6" fill="#ccc" stroke="#888"/></svg>:0</button>
    <button aria-label="Design options"><svg width="16" height="16" viewBox="0 0 16 16"><rect x=".500" y="1.500" width="15" height="13" rx="1" fill="#fff" stroke="#222"/><path d="M1 3.500h14M3 6.500h3M8 6.500h5M5 9.500h2M8 9.500h5M5 12.500h2M8 12.500h5" stroke="#222"/></svg></button>
    <button aria-label="Add to set"><svg width="16" height="16" viewBox="0 0 16 16"><path d="M1 1h14v14H7V8H1z" fill="#999"/><path d="M1 12h7M6 9l3 3-3 3" stroke="#777" fill="none" stroke-width="2"/></svg></button>
    <span class="combo white off model"><select aria-label="Design option" disabled><option>Main Model</option></select></span>
    <div class="selectors">
        <button aria-label="Select Links"><svg width="18" height="16" viewBox="0 0 18 16"><rect x="1" y="2" width="9" height="5" rx="2" fill="none" stroke="#c09818" stroke-width="2"/><rect x="8" y="2" width="8" height="5" rx="2" fill="none" stroke="#c09818" stroke-width="2"/><path d="M8 5v9l2-2 1 3 2-1-1-3h3z" fill="#fff" stroke="#333"/></svg></button>
        <button aria-label="Select Underlay"><svg width="18" height="16" viewBox="0 0 18 16"><path d="M1 8l7-6h8l-6 6zM1 12h8M1 12l4-4" fill="#c8e0f4" stroke="#2d6ba8"/><path d="M10 5v9l2-2 1 3 2-1-1-3h3z" fill="#fff" stroke="#333"/></svg></button>
        <button aria-label="Select Pinned"><svg width="18" height="16" viewBox="0 0 18 16"><path d="M3 1h8v3H9v3h2v3H2V7h2V4H3zM6 10v5" fill="#f0a878" stroke="#a04018"/><path d="M10 5v9l2-2 1 3 2-1-1-3h3z" fill="#fff" stroke="#333"/></svg></button>
        <button aria-label="Select by Face"><svg width="18" height="16" viewBox="0 0 18 16"><path d="M2 4l6-2v10l-6 3z" fill="#b4dcf2" stroke="#2d6ba8"/><path d="M10 1l5 5M15 1l-5 5" stroke="#b01818" stroke-width="2"/><path d="M8 5v9l2-2 1 3 2-1-1-3h3z" fill="#fff" stroke="#333"/></svg></button>
        <button aria-label="Drag on Selection"><svg width="18" height="16" viewBox="0 0 18 16"><path d="M6 0v10M1 5h10M4 2l2-2 2 2M4 8l2 2 2-2M3 3L1 5l2 2M9 3l2 2-2 2" stroke="#111" fill="none"/><path d="M11 5v9l2-2 1 3 2-1-1-3h3z" fill="#fff" stroke="#333"/></svg></button>
        <button class="count"><svg width="16" height="14" viewBox="0 0 16 14"><path d="M.500.500h15L10 7v6H6V7z" fill="#ccd0d6" stroke="#444"/></svg>:0</button>
    </div>
</footer>
</body>
</html>
```
FILE: styles.css
```css
* {
    box-sizing: border-box;
}
body {
    margin: 0;
    height: 100vh;
    display: flex;
    flex-direction: column;
    overflow: hidden;
    background: #eeeeee;
    color: #222;
    font: 11px/16px "Noto Sans", "Open Sans", sans-serif;
}
button, input, select {
    font: inherit;
    color: inherit;
    margin: 0;
}
button {
    display: flex;
    align-items: center;
    justify-content: center;
    padding: 0;
    border: 0;
    background: none;
}
svg {
    display: block;
    flex: none;
}
h2, h3, p, ul {
    margin: 0;
    padding: 0;
    font-size: 11px;
    font-weight: normal;
    list-style: none;
}
.caret {
    flex: none;
    border: 3px solid transparent;
    border-top-color: #444;
    border-bottom: 0;
}

/* drop-downs */
.combo {
    display: grid;
    align-items: center;
}
.combo select,
.combo::after {
    grid-area: 1 / 1;
}
.combo select {
    appearance: none;
    width: 100%;
    height: 22px;
    padding: 0 18px 0 4px;
    border: 1px solid #999;
    border-radius: 2px;
    background: linear-gradient(#f6f6f6, #d4d4d4);
    color: #000;
    opacity: 1;
}
.combo::after {
    content: "";
    justify-self: end;
    margin-right: 4px;
    border: 4px solid transparent;
    border-top-color: #000;
    border-bottom: 0;
    pointer-events: none;
}
.combo.white select {
    border-color: #ddd;
    background: #fff;
}
.combo.off select {
    color: #777;
}
.combo.off::after {
    border-top-color: #999;
}

/* header */
.app-header {
    display: grid;
    grid-template-columns: 41px 1fr;
    grid-template-rows: 24px 20px;
    background: #9c9c9c;
}
.app-button {
    grid-row: 1 / 3;
    gap: 2px;
    border: 1px solid #222;
    border-top-width: 2px;
    background: linear-gradient(#cfcfcf, #8a8a8a);
}
.titlebar {
    display: flex;
    padding-top: 3px;
    border-bottom: 1px solid #666;
    background: linear-gradient(90deg, #666 183px, #0e4c9c 183px 1015px, #3d6ca8 1015px);
}
.qat,
.infocenter {
    display: flex;
    align-items: center;
    background: linear-gradient(#ececec, #b8b8b8);
}
.qat {
    width: 449px;
    padding-left: 5px;
}
.qat button,
.infocenter button {
    width: 24px;
    height: 20px;
}
.qat .drop,
.infocenter .drop {
    width: 12px;
}
.qat .drop:last-child {
    width: 18px;
}
.qat .active {
    border: 1px solid #3e7cc0;
    background: #c3dcf5;
}
.text-tool {
    font-size: 17px;
    font-weight: bold;
    color: #333;
}
.sep {
    width: 7px;
}
.sep.thin {
    width: 7px;
    height: 16px;
    border-left: 1px solid #aaa;
}
.infocenter .sep {
    margin-left: 4px;
}
.doc-title {
    width: 186px;
    padding-left: 17px;
    overflow: hidden;
    white-space: nowrap;
    line-height: 18px;
    color: #0b1c38;
    background: linear-gradient(90deg, #2c67ae, #6d98c8 20%, #6d98c8 90%, #2c67ae);
}
.infocenter {
    width: 481px;
    padding-bottom: 1px;
}
.search {
    width: 182px;
    height: 20px;
    margin-right: 2px;
    padding: 0 4px;
    border: 1px solid #bbb;
    background: #f4f4f4;
    font-style: italic;
}
.search::placeholder {
    color: #666;
}
.infocenter .sign-in {
    width: auto;
    padding-left: 4px;
    gap: 4px;
    color: #111;
}
.infocenter .push {
    margin-left: auto;
}
.window-buttons {
    display: flex;
    height: 17px;
    margin: -3px 2px 0 auto;
    border: 1px solid #ddd;
    border-top: 0;
    border-radius: 0 0 4px 4px;
    overflow: hidden;
}
.window-buttons button {
    width: 28px;
    border-right: 1px solid #ccd;
    background: linear-gradient(#8c9cb4, #3c5880);
}
.window-buttons .close {
    width: 46px;
    border: 0;
    background: linear-gradient(#d88878, #b42418 50%, #c8402c);
}
.tabs {
    display: flex;
    padding-left: 4px;
}
.tabs a {
    padding: 1px 11px 0 10px;
    line-height: 19px;
    color: #222;
    text-decoration: none;
    white-space: nowrap;
}
.tabs .current {
    padding: 0 9px;
    border: 1px solid #78d048;
    border-bottom: 0;
    background: linear-gradient(#b6e89c, #eafbe0);
}
.ribbon-toggle {
    margin-left: 22px;
}

/* ribbon */
.ribbon {
    display: flex;
    height: 95px;
    flex: none;
    padding-left: 2px;
    border-top: 1px solid #6cc43c;
    border-bottom: 1px solid #6cc43c;
    background: linear-gradient(#d4eac8, #8c8c8c);
}
.panel {
    display: flex;
    flex-direction: column;
    flex: none;
    border-right: 1px solid #a8a8a8;
    background: #fff;
}
.panel h2 {
    display: flex;
    align-items: center;
    justify-content: center;
    gap: 6px;
    height: 18px;
    flex: none;
    background: #eaeaea;
    color: #333;
}
.panel h2 .caret {
    border-width: 4px 4px 0;
}
.panel.green h2 {
    background: linear-gradient(#c8ecb4, #e4fad8);
}
.body {
    display: flex;
    flex: 1;
    min-height: 0;
    justify-content: center;
    padding: 1px 2px;
}
.p-select { width: 56px; }
.p-props { width: 64px; }
.p-clip { width: 80px; }
.p-geom { width: 139px; }
.p-modify { width: 238px; }
.p-view { width: 65px; }
.p-measure { width: 56px; }
.p-create {
    width: 81px;
    margin-right: 4px;
    background: #f2f2f2;
}
.p-mode { width: 96px; }
.p-place { width: 121px; }
.p-tag {
    width: 66px;
    border: 0;
}
.big {
    flex-direction: column;
    justify-content: flex-start;
    padding-top: 3px;
    line-height: 15px;
    color: #333;
}
.big svg {
    margin-bottom: 4px;
}
.big.off {
    color: #999;
}
.green .body {
    padding: 2px 0;
}
.green .big {
    flex: 0 0 44px;
    padding-top: 2px;
    white-space: nowrap;
}
.p-mode .body {
    justify-content: flex-start;
    gap: 1px;
}
.p-tag .big {
    flex: 1;
}
.ribbon .active {
    border: 1px solid #2e6ab0;
    background: #b4d2f0;
}
.p-place .big {
    flex-basis: 52px;
    padding-top: 1px;
}
.p-place .framed {
    flex-basis: 66px;
    border: 1px solid #ccc;
    background: #f2f2f6;
}
.stack {
    flex-direction: column;
    align-items: center;
    gap: 2px;
}
.stack button {
    width: 38px;
    height: 34px;
}
.clip {
    justify-content: space-between;
    padding: 1px 5px 1px 10px;
}
.small-col {
    display: grid;
    grid-template-rows: repeat(3, 24px);
}
.geom {
    display: grid;
    grid-template-columns: 74px 24px 32px;
    grid-template-rows: repeat(3, 24px);
    justify-content: start;
    padding-left: 6px;
}
.geom button {
    justify-content: flex-start;
    gap: 6px;
    color: #333;
}
.geom .row .caret {
    margin-left: 2px;
}
.modify {
    justify-content: flex-start;
    padding-left: 3px;
}
.big-grid {
    display: grid;
    grid-template: 36px 36px / repeat(4, 39px);
}
.small-grid {
    display: grid;
    grid-template: repeat(3, 24px) / repeat(3, 25px);
}
.pair {
    display: grid;
    grid-template-columns: 34px 26px;
    grid-template-rows: 24px 24px;
    align-content: center;
}
.create {
    grid-template-columns: 38px 38px;
    grid-template-rows: 36px 36px;
}
.measure {
    display: grid;
    grid-template-rows: 36px 36px;
}
.wide {
    gap: 8px;
}
.pair .wide {
    gap: 6px;
}

/* options bar */
.options-bar {
    display: flex;
    align-items: center;
    flex: none;
    height: 28px;
    padding-top: 1px;
    background: #d8e5d1;
    color: #111;
}
.mode-name {
    width: 166px;
    margin-left: 9px;
    font-weight: normal;
    white-space: nowrap;
    border-right: 1px solid #fff;
}
.check {
    display: flex;
    align-items: center;
    gap: 3px;
    white-space: nowrap;
}
.check input {
    appearance: none;
    width: 13px;
    height: 13px;
    border: 1px solid #8c8c8c;
    background: linear-gradient(135deg, #ccc, #fff);
}
.check input:disabled {
    border-color: #bbb;
    background: #f4f4f0;
}
.options-bar > .check {
    width: 160px;
    padding-left: 9px;
    border-right: 1px solid #fff;
}
.tag-options {
    display: flex;
    align-items: center;
    gap: 4px;
    width: 373px;
    padding-left: 8px;
    border-right: 1px solid #999;
    color: #777;
}
.tag-options .combo {
    width: 80px;
}
.tag-options select,
.tags {
    border: 1px solid #bbb;
    background: #e6e8e2;
}
.tag-options select {
    padding: 0 12px 0 2px;
}
.tags {
    width: 44px;
    height: 22px;
    margin: 0 2px;
}
.tag-options .check {
    width: 55px;
}
.length {
    width: 120px;
    height: 22px;
    padding: 0 5px;
    border: 1px solid #b4b8b0;
    background: #d8e5d1;
}
.level {
    display: flex;
    align-items: center;
    gap: 7px;
    padding-left: 9px;
}
.level .combo {
    width: 80px;
}
.level .combo select {
    padding-left: 4px;
    border-color: #ccd2c8;
    background: linear-gradient(#f4f4f4, #e4e6e2);
}

/* workspace */
.workspace {
    display: flex;
    flex: 1;
    min-height: 0;
}
.palettes {
    display: flex;
    flex-direction: column;
    width: 219px;
    flex: none;
    margin-right: 6px;
}
.palette {
    display: flex;
    flex-direction: column;
}
.palette > header {
    display: flex;
    align-items: center;
    justify-content: space-between;
    flex: none;
    height: 17px;
    margin-bottom: 2px;
    padding: 0 5px 0 4px;
    background: #bccadb;
    color: #3a4652;
}
.palette h3 {
    white-space: nowrap;
}
.type-selector {
    display: flex;
    align-items: center;
    gap: 4px;
    height: 74px;
    margin: 0 1px;
    padding-left: 3px;
    border: 1px solid #ccc;
    border-top: 2px solid #777;
    border-left-color: #777;
    background: linear-gradient(#fafafa, #e6e6e6);
    color: #444;
}
.type-selector svg {
    border: 1px solid #ccc;
    background: #fff;
}
.type-selector p {
    white-space: nowrap;
    flex: 1;
    min-width: 0;
}
.type-selector .caret {
    border-width: 4px 4px 0;
    margin-right: 1px;
}
.instance {
    display: flex;
    align-items: center;
    height: 24px;
    padding-left: 2px;
    gap: 6px;
}
.instance .combo {
    width: 132px;
}
.instance select {
    border-color: #666;
    border-radius: 3px;
}
.edit-type {
    gap: 5px;
    white-space: nowrap;
}
.grid-view {
    display: flex;
    height: 154px;
    margin: 0 2px;
    overflow: hidden;
    background: #fff;
}
.grid-view table {
    flex: 1;
    table-layout: fixed;
    border-collapse: collapse;
    align-self: flex-start;
    color: #000;
}
.name-col {
    width: 100px;
}
.grid-view tr {
    height: 18px;
}
.grid-view td,
.grid-view th {
    height: 18px;
    padding: 0 0 0 10px;
    overflow: hidden;
    line-height: 16px;
    white-space: nowrap;
    font-weight: normal;
    text-align: left;
    border-bottom: 1px dotted #999;
}
.grid-view td + td {
    padding-left: 4px;
    border-left: 1px dotted #999;
    border-right: 1px dotted #999;
}
.grid-view td.field {
    padding: 0;
}
.grid-view th {
    padding: 0 4px;
    border-bottom: 0;
    background: #dadada;
}
.grid-view th span {
    display: flex;
    align-items: center;
    justify-content: space-between;
}
.grid-view .ro {
    color: #888;
}
.field input {
    display: block;
    width: 100%;
    height: 17px;
    padding: 0 3px;
    border: 1px solid #000;
    color: #000;
}
.field button {
    width: 97px;
    height: 16px;
    margin-left: 1px;
    border: 1px solid #555;
    border-radius: 3px;
    background: linear-gradient(#f2f2f2, #cfcfcf);
}
.palette > footer {
    display: flex;
    align-items: center;
    justify-content: space-between;
    height: 27px;
    margin-bottom: 6px;
    padding: 0 4px;
    border-bottom: 1px solid #fff;
}
.palette > footer a {
    color: #2364b4;
}
.palette > footer button {
    width: 73px;
    height: 21px;
    border: 1px solid #bbb;
    border-radius: 3px;
    background: #f2f2f2;
    color: #888;
}

/* scroll bars */
.vscroll {
    display: flex;
    flex-direction: column;
    align-items: center;
    width: 16px;
    flex: none;
    padding: 6px 0;
    background: #eeeeee;
}
.hscroll {
    display: flex;
    align-items: center;
    height: 16px;
    padding: 0 6px;
    background: #eeeeee;
}
.vscroll i,
.hscroll i {
    border: 3px solid transparent;
}
.vscroll .up {
    border-bottom-color: #333;
    border-top: 0;
}
.vscroll .down {
    margin-top: auto;
    border-top-color: #333;
    border-bottom: 0;
}
.hscroll .left {
    border-right-color: #333;
    border-left: 0;
}
.hscroll .right {
    margin-left: auto;
    border-left-color: #333;
    border-right: 0;
}
.thumb {
    display: grid;
    place-items: center;
    width: 14px;
    border: 1px solid #999;
    border-radius: 2px;
    background: linear-gradient(90deg, #f6f6f6, #ccc);
}
.grip::before {
    content: "";
    width: 7px;
    height: 8px;
    background: repeating-linear-gradient(#666 0 1px, transparent 1px 3px);
}
.short {
    height: 18px;
    margin-top: 9px;
}
.tall {
    height: 55px;
    margin-top: 8px;
}
.palette > .hscroll {
    width: 202px;
    margin-left: 2px;
    flex: none;
}
.palette > .hscroll .thumb {
    width: 109px;
    height: 14px;
    margin-left: 8px;
    background: linear-gradient(#f6f6f6, #ccc);
}
.palette > .hscroll .thumb::before {
    content: "";
    width: 8px;
    height: 7px;
    background: repeating-linear-gradient(90deg, #666 0 1px, transparent 1px 3px);
}

/* project browser */
.browser {
    flex: 1;
    min-height: 0;
    padding-bottom: 1px;
}
.tree-view {
    display: flex;
    flex: 1;
    min-height: 0;
    margin: 0 1px;
    border-top: 2px solid #777;
    border-left: 1px solid #777;
    background: #fff;
}
.tree {
    flex: 1;
    min-width: 0;
    overflow: hidden;
    padding-left: 4px;
    line-height: 18px;
    white-space: nowrap;
    color: #111;
}
.node {
    display: flex;
    align-items: center;
    height: 18px;
}
.box {
    width: 9px;
    height: 9px;
    border: 1px solid #888;
    background: linear-gradient(#446, #446) 50% 50% / 5px 1px no-repeat #fff;
}
.twig {
    width: 9px;
    margin-right: 4px;
    border-top: 1px dotted #999;
}
.root .twig {
    width: 7px;
    margin-right: 1px;
}
.picked {
    margin-left: 5px;
    padding: 0 3px 0 2px;
    background: #e0e0e0;
}
.disciplines {
    margin-left: 4px;
    padding-left: 19px;
    border-left: 1px dotted #999;
}
.disciplines > li {
    border-left: 1px dotted #999;
}
.disciplines .node {
    margin-left: -5px;
}
.disciplines ul {
    padding-left: 19px;
}
.disciplines ul li {
    display: flex;
    height: 18px;
    gap: 2px;
}
.disciplines ul li:not(:last-child) {
    background: repeating-linear-gradient(#999 0 1px, transparent 1px 2px) 0 0 / 1px 100% no-repeat;
}
.disciplines ul li::before {
    content: "";
    flex: none;
    width: 15px;
    height: 10px;
    border-left: 1px dotted #999;
    border-bottom: 1px dotted #999;
}

/* drawing view */
.view {
    display: grid;
    flex: 1;
    min-width: 0;
    grid-template-columns: 1fr 18px;
    grid-template-rows: 1fr 18px;
    border-top: 1px solid #666;
    border-left: 1px solid #666;
    margin-bottom: 1px;
}
.canvas {
    position: relative;
    min-height: 0;
    overflow: hidden;
    background: #fff;
}
.drawing {
    width: 100%;
    height: 100%;
}
.thin {
    fill: none;
    stroke: #b0b0b0;
}
.ink {
    fill: none;
    stroke: #000;
}
.conduit {
    fill: #666;
    stroke: #111;
}
.face {
    fill: none;
    stroke: #3f68b4;
    stroke-width: 2;
}
.gear {
    fill: #6d6d6d;
    stroke: #000;
}
.marks,
.levels {
    font-family: "Liberation Sans", Arial, sans-serif;
    font-size: 23px;
    fill: #000;
}
.levels {
    font-size: 27px;
    text-anchor: end;
}
.heads circle {
    fill: #fff;
    stroke: #1a3c90;
}
.heads path {
    fill: #0433b8;
}
.dims {
    fill: none;
    stroke: #6f8bd8;
}
.dims text {
    font: bold 10px "Liberation Sans", Arial, sans-serif;
    fill: #6f8bd8;
    stroke: none;
}
.dims .vertical {
    font-size: 12px;
    font-weight: normal;
}
.tooltip {
    position: absolute;
    left: 557px;
    top: 176px;
    padding: 1px 5px;
    border: 1px solid #666;
    border-radius: 3px;
    background: linear-gradient(#fff, #e4e5f0);
    box-shadow: 2px 2px 3px #888;
    color: #555;
}
.snap {
    position: absolute;
    left: 558px;
    top: 165px;
}
.view-controls {
    position: absolute;
    top: 8px;
    right: 5px;
    display: flex;
    gap: 6px;
}
.navbar {
    position: absolute;
    top: 28px;
    right: 1px;
    display: flex;
    flex-direction: column;
    align-items: center;
    width: 36px;
    height: 118px;
    border: 2px solid #c0c0c0;
    border-radius: 5px;
    background: #f4f4f4;
}
.navbar .end {
    align-self: flex-end;
    margin: 2px 2px 8px 0;
}
.navbar .last {
    margin: auto 2px 2px 0;
}
.wheel span {
    margin: 12px 0 0 -11px;
    color: #5078b0;
    line-height: 14px;
}
.navbar .caret {
    margin-top: 6px;
    border-top-color: #999;
}
.navbar hr {
    width: 26px;
    margin: 5px 0 8px;
    border: 0;
    border-top: 1px solid #bbb;
}
.navbar hr + button + .caret {
    margin-top: 8px;
}
.canvas-scroll .thumb {
    height: 15px;
    margin-top: 238px;
}
.view-bar {
    display: flex;
    align-items: center;
    background: #f2f2f2;
}
.view-bar button {
    width: 21px;
}
.view-bar .scale {
    width: 76px;
    padding-left: 6px;
    color: #111;
}
.view-bar .hscroll {
    flex: 1;
}
.view-bar .thumb {
    height: 14px;
    margin-left: 358px;
}
.sizer {
    background: radial-gradient(#bbb 1px, transparent 1px) 4px 4px / 4px 4px;
    clip-path: polygon(100% 20%, 100% 100%, 20% 100%);
}

/* status bar */
.status {
    display: flex;
    align-items: center;
    flex: none;
    height: 25px;
    border-top: 1px solid #888;
    border-bottom: 2px solid #2c3444;
    background: linear-gradient(#e2e2e2, #b8b8b8);
    color: #111;
}
.status output {
    width: 334px;
    padding-left: 2px;
    overflow: hidden;
    white-space: nowrap;
}
.status > button {
    width: 26px;
    height: 22px;
    margin-left: 1px;
    background: #dedede;
}
.status > .count {
    width: 52px;
    margin: 0 1px 0 3px;
    padding-right: 6px;
    gap: 3px;
}
.status .combo select {
    border-radius: 0;
    color: #888;
}
.workset {
    width: 206px;
    margin-left: 4px;
}
.model {
    width: 156px;
    margin-left: 1px;
}
.selectors {
    display: flex;
    margin-left: auto;
    margin-right: 66px;
    gap: 2px;
}
.selectors button {
    width: 24px;
    height: 22px;
    background: #d6d6d6;
}
.selectors .count {
    width: auto;
    background: none;
    gap: 1px;
}
```
